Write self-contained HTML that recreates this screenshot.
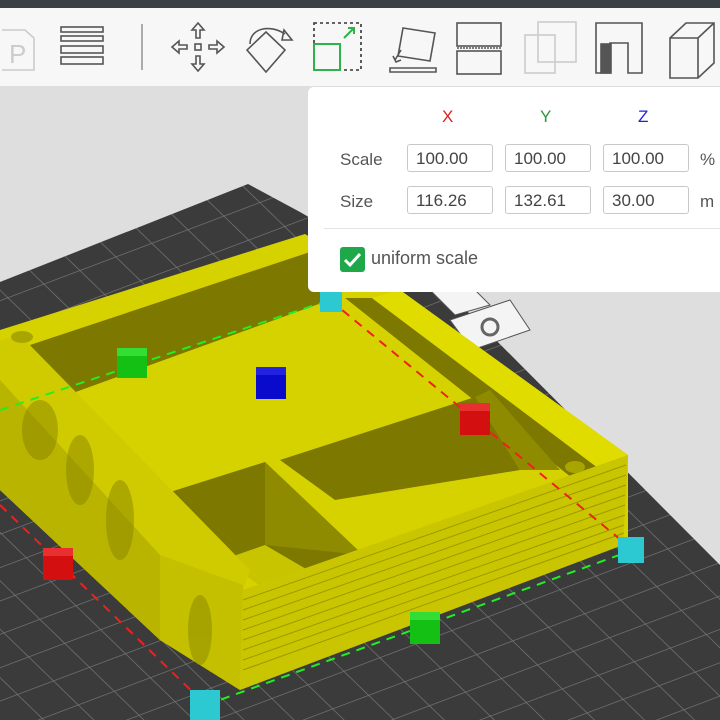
<!DOCTYPE html>
<html><head><meta charset="utf-8"><style>
html,body{margin:0;padding:0;width:720px;height:720px;overflow:hidden;background:#dedede;font-family:"Liberation Sans",sans-serif}
.top{position:absolute;left:0;top:0;width:720px;height:8px;background:#3a4144}
.tb{position:absolute;left:0;top:8px;width:720px;height:78px;background:#f7f7f7}
.panel{position:absolute;left:308px;top:87px;width:420px;height:205px;background:#fff;border-radius:6px}
.lab{position:absolute;font-size:17px;color:#555}
.inp{position:absolute;height:28px;border:1px solid #c8c8c8;border-radius:3px;font-size:17px;color:#444;line-height:28px;padding-left:8px;box-sizing:border-box;width:86px}
</style></head><body>
<svg width="720" height="720" style="position:absolute;left:0;top:0">
<defs>
<pattern id="g" width="40" height="40" patternUnits="userSpaceOnUse" patternTransform="matrix(0.9 -0.34 0.62 0.6 0 0)">
<rect width="40" height="40" fill="#3b3b3b"/>
<path d="M0 0H40M0 0V40" stroke="#777" stroke-width="1.6" fill="none"/>
</pattern>
</defs>
<rect x="0" y="86" width="720" height="634" fill="#dedede"/>
<polygon points="248,184 300,212 460,304 720,565 720,720 0,720 0,282" fill="url(#g)"/>
<!-- plate icons behind -->
<polygon points="430,290 470,285 490,305 455,315" fill="#f4f4f4" stroke="#555"/>
<polygon points="450,320 510,300 530,330 472,350" fill="#f4f4f4" stroke="#555"/>
<circle cx="490" cy="327" r="8" fill="none" stroke="#666" stroke-width="3"/>
<!-- box top area -->
<polygon points="0,330 305,234 400,290 628,455 628,540 240,690 160,640 0,490" fill="#d6d200"/>
<!-- back wall dark -->
<polygon points="30,345 310,252 330,300 62,397" fill="#7c7800"/>
<!-- right wall inner dark -->
<polygon points="345,298 372,298 598,468 572,478" fill="#7c7800"/>
<!-- floor -->
<polygon points="62,397 330,300 345,298 572,478 250,580" fill="#d6d200"/>
<!-- compartments -->
<polygon points="167,493 265,462 363,555 265,588 222,560" fill="#7c7800"/>
<polygon points="222,560 265,545 325,580 265,588" fill="#c8c400"/>
<polygon points="265,462 265,545 363,555" fill="#8f8b00"/>
<polygon points="280,460 475,397 520,470 335,500" fill="#7c7800"/>
<polygon points="475,397 490,390 560,470 520,470" fill="#8f8b00"/>
<!-- right rim -->
<polygon points="400,290 628,455 598,468 372,298" fill="#e0dc00"/>
<!-- front face layered -->
<polygon points="243,590 628,455 623,545 240,690" fill="#c9c500"/>
<g stroke="#8a8600" stroke-width="1" opacity=".7">
<line x1="243" y1="600" x2="626" y2="465"/><line x1="243" y1="610" x2="626" y2="475"/><line x1="243" y1="620" x2="626" y2="485"/><line x1="243" y1="630" x2="625" y2="495"/><line x1="243" y1="640" x2="625" y2="505"/><line x1="243" y1="650" x2="625" y2="515"/><line x1="243" y1="660" x2="624" y2="525"/><line x1="243" y1="670" x2="624" y2="533"/>
</g>
<!-- left ornate wall -->
<polygon points="0,340 20,335 250,570 243,590 160,640 0,490" fill="#cfcb00"/>
<polygon points="0,380 160,555 160,640 0,490" fill="#b8b400"/>
<polygon points="160,555 243,585 240,690 160,640" fill="#c4c000"/>
<g fill="#8a8600" opacity=".5"><ellipse cx="40" cy="430" rx="18" ry="30"/><ellipse cx="80" cy="470" rx="14" ry="35"/><ellipse cx="120" cy="520" rx="14" ry="40"/><ellipse cx="200" cy="630" rx="12" ry="35"/></g>
<ellipse cx="22" cy="337" rx="11" ry="6" fill="#a9a500"/><ellipse cx="575" cy="467" rx="10" ry="6" fill="#a9a500"/>
<!-- dashed lines -->
<g stroke-dasharray="9 7" stroke-width="2" fill="none">
<line x1="0" y1="410" x2="330" y2="300" stroke="#22ee22"/>
<line x1="206" y1="705" x2="633" y2="550" stroke="#22ee22"/>
<line x1="330" y1="300" x2="633" y2="550" stroke="#ee2020"/>
<line x1="0" y1="505" x2="206" y2="705" stroke="#ee2020"/>
</g>
<!-- cubes -->
<g>
<rect x="320" y="290" width="22" height="22" fill="#2cc9d3"/>
<rect x="618" y="537" width="26" height="26" fill="#2cc9d3"/>
<rect x="190" y="690" width="30" height="30" fill="#2cc9d3"/>
<rect x="117" y="348" width="30" height="30" fill="#15c015"/><rect x="117" y="348" width="30" height="8" fill="#33dd33"/>
<rect x="410" y="612" width="30" height="32" fill="#15c015"/><rect x="410" y="612" width="30" height="8" fill="#33dd33"/>
<rect x="256" y="367" width="30" height="32" fill="#0a0acc"/><rect x="256" y="367" width="30" height="8" fill="#2222e0"/>
<rect x="460" y="403" width="30" height="32" fill="#d40f0f"/><rect x="460" y="403" width="30" height="8" fill="#e83030"/>
<rect x="43" y="548" width="30" height="32" fill="#d40f0f"/><rect x="43" y="548" width="30" height="8" fill="#e83030"/>
</g>
</svg>
<div class="top"></div>
<div class="tb">
<svg width="720" height="78" style="position:absolute;left:0;top:0" fill="none" stroke="#555" stroke-width="1.6">
<path d="M2 22 H25 L34 30 V62 H2" stroke="#ccc"/><text x="9" y="55" font-size="26" fill="#ccc" stroke="none" font-family="Liberation Sans">P</text>
<rect x="61" y="19" width="42" height="5"/><rect x="61" y="28" width="42" height="5"/><rect x="61" y="38" width="42" height="7"/><rect x="61" y="49" width="42" height="7"/>
<line x1="142" y1="16" x2="142" y2="62" stroke="#999"/>
<path d="M198 15 l-6 7 h4 v8 h4 v-8 h4z M198 63 l-6 -7 h4 v-8 h4 v8 h4z M172 39 l7 -6 v4 h8 v4 h-8 v4z M224 39 l-7 -6 v4 h-8 v4 h8 v4z"/><rect x="195" y="36" width="6" height="6"/>
<polygon points="266,24 285,42 266,64 247,42"/><path d="M250 36 C250 20 270 16 285 26"/><path d="M284 22 l8 10 l-10 0z"/>
<rect x="314" y="15" width="47" height="47" stroke-dasharray="3 3" stroke="#333"/><rect x="314" y="36" width="26" height="26" stroke="#2db34a" stroke-width="2"/><path d="M344 30 l10 -10 M348 20 h6 v6" stroke="#2db34a" stroke-width="2"/>
<polygon points="403,20 435,25 430,53 398,48"/><path d="M390 60 H436 V64 H390z"/><path d="M395 52 l6 -10 M393 48 l3 6 5 -2"/>
<rect x="457" y="15" width="44" height="23"/><rect x="457" y="43" width="44" height="23"/><line x1="457" y1="40" x2="501" y2="40" stroke-dasharray="2 1"/>
<rect x="525" y="27" width="30" height="38" stroke="#ccc"/><rect x="538" y="14" width="38" height="40" stroke="#ccc"/>
<path d="M596 15 H642 V65 H628 V35 H610 V65 H596z"/><rect x="601" y="36" width="10" height="29" fill="#555"/>
<path d="M670 30 L686 15 H714 V55 L698 70 H670z M670 30 H698 V70 M698 30 L714 15"/>
</svg>
</div>
<div class="panel">
<div class="lab" style="left:134px;top:20px;color:#e02020">X</div>
<div class="lab" style="left:232px;top:20px;color:#2a9a40">Y</div>
<div class="lab" style="left:330px;top:20px;color:#2020e0">Z</div>
<div class="lab" style="left:32px;top:63px">Scale</div>
<div class="lab" style="left:32px;top:105px">Size</div>
<div class="inp" style="left:99px;top:57px">100.00</div>
<div class="inp" style="left:197px;top:57px">100.00</div>
<div class="inp" style="left:295px;top:57px">100.00</div>
<div class="inp" style="left:99px;top:99px">116.26</div>
<div class="inp" style="left:197px;top:99px">132.61</div>
<div class="inp" style="left:295px;top:99px">30.00</div>
<div class="lab" style="left:392px;top:63px">%</div>
<div class="lab" style="left:392px;top:105px">m</div>
<div style="position:absolute;left:16px;top:141px;width:404px;height:1px;background:#e4e4e4"></div>
<div style="position:absolute;left:32px;top:160px;width:25px;height:25px;background:#1fa84a;border-radius:3px"><svg width="25" height="25"><path d="M5 13 l5 5 l10 -11" stroke="#fff" stroke-width="3" fill="none"/></svg></div>
<div class="lab" style="left:63px;top:161px;font-size:18px">uniform scale</div>
</div>
</body></html>
